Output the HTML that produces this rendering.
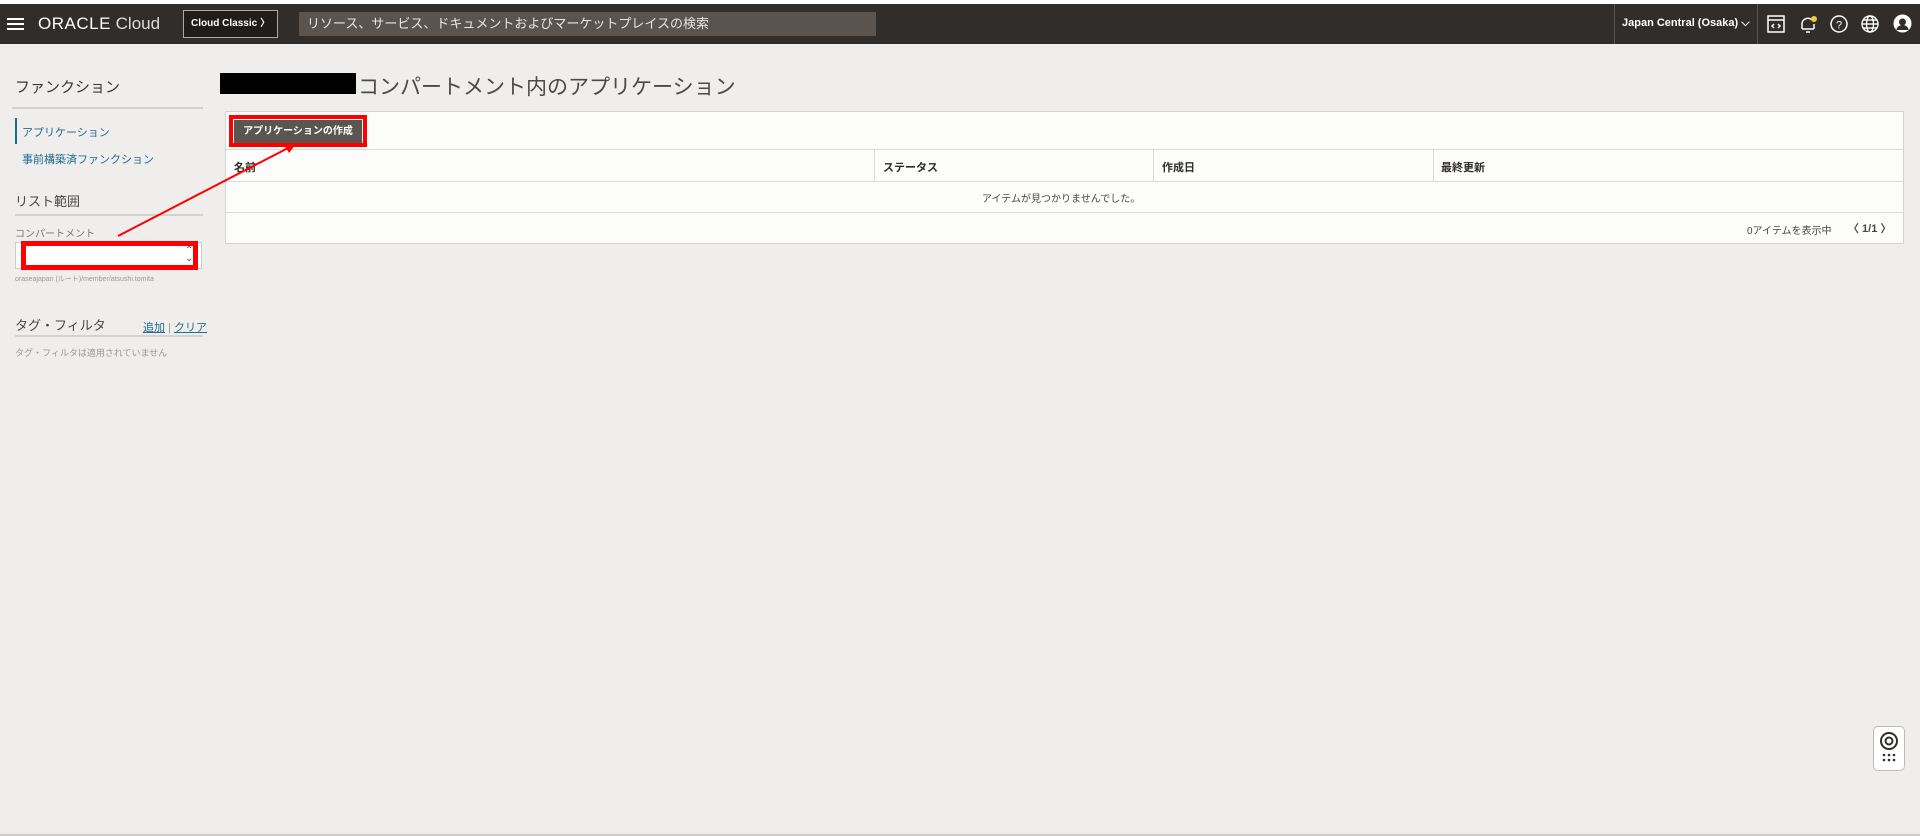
<!DOCTYPE html>
<html><head><meta charset="utf-8"><style>
*{box-sizing:border-box;margin:0;padding:0}
body{width:1920px;height:836px;background:#efeeec;font-family:"Liberation Sans","Noto Sans CJK JP",sans-serif;color:#312d2a;position:relative;overflow:hidden}
.a{position:absolute;white-space:nowrap}
#top{position:absolute;left:0;top:0;width:1920px;height:4px;background:#fff}
#hdr{position:absolute;left:0;top:4px;width:1920px;height:40px;background:#312d2a;color:#fff}
.ln{position:absolute;background:#d4d2cf;height:1px}
.link{color:#1f6c8f}
.panel{position:absolute;left:225px;top:111px;width:1679px;height:133px;background:#fcfcfb;border:1px solid #d6d4d1}
.row{position:absolute;left:0;width:100%;border-top:1px solid #dcdad7}
.th{position:absolute;top:159px;font-size:11px;font-weight:bold}
.vd{position:absolute;top:149px;width:1px;height:32px;background:#dcdad7}
</style></head><body>
<div id="top"></div>
<div id="hdr">
 <svg class="a" style="left:7px;top:13px" width="17" height="14"><rect y="1" width="17" height="2" fill="#fff"/><rect y="6" width="17" height="2" fill="#fff"/><rect y="11" width="17" height="2" fill="#fff"/></svg>
 <div class="a" style="left:38px;top:10px;font-size:17px"><span style="letter-spacing:0.5px">ORACLE</span> <span style="color:#ddd">Cloud</span></div>
 <div class="a" style="left:183px;top:6px;width:95px;height:28px;border:1px solid #aaa;background:#1f1c1a;font-size:10px;font-weight:bold;line-height:26px;text-align:center">Cloud Classic 〉</div>
 <div class="a" style="left:299px;top:8px;width:577px;height:24px;background:#5a534e;font-size:13px;line-height:24px;padding-left:8px;color:#e8e6e3">リソース、サービス、ドキュメントおよびマーケットプレイスの検索</div>
 <div class="a" style="left:1614px;top:0;width:1px;height:40px;background:#5b5550"></div>
 <div class="a" style="left:1622px;top:13px;font-size:11px;font-weight:bold">Japan Central (Osaka) ⌵</div>
 <div class="a" style="left:1757px;top:0;width:1px;height:40px;background:#5b5550"></div>
 <svg class="a" style="left:1767px;top:11px" width="18" height="18" fill="none" stroke="#fff" stroke-width="1.5"><rect x="1" y="1" width="16" height="16"/><line x1="1" y1="5" x2="17" y2="5"/><path d="M7 9l-2 2 2 2M11 9l2 2-2 2"/></svg>
 <svg class="a" style="left:1799px;top:10px" width="18" height="20" fill="none" stroke="#fff" stroke-width="1.5"><path d="M3 15V9a6 6 0 0 1 10-3M3 15h12M7 18h4M15 10v5"/><circle cx="15" cy="5" r="3" fill="#f4c542" stroke="none"/></svg>
 <svg class="a" style="left:1830px;top:11px" width="18" height="18" fill="none" stroke="#fff" stroke-width="1.5"><circle cx="9" cy="9" r="8"/><text x="9" y="13.5" font-size="11" fill="#fff" stroke="none" text-anchor="middle" font-family="Liberation Sans">?</text></svg>
 <svg class="a" style="left:1861px;top:11px" width="18" height="18" fill="none" stroke="#fff" stroke-width="1.4"><circle cx="9" cy="9" r="8"/><ellipse cx="9" cy="9" rx="3.5" ry="8"/><line x1="1" y1="9" x2="17" y2="9"/><line x1="2" y1="5" x2="16" y2="5"/><line x1="2" y1="13" x2="16" y2="13"/></svg>
 <svg class="a" style="left:1893px;top:10px" width="19" height="19"><circle cx="9.5" cy="9.5" r="9" fill="#fff"/><circle cx="9.5" cy="8" r="3.5" fill="#312d2a"/><path d="M3.5 16a6 5 0 0 1 12 0" fill="#312d2a"/></svg>
</div>

<div class="a" style="left:15px;top:76px;font-size:15px;color:#3a3632">ファンクション</div>
<div class="ln" style="left:12px;top:107px;width:191px;height:2px"></div>
<div class="a" style="left:15px;top:118px;width:2px;height:26px;background:#1f6c8f"></div>
<div class="a link" style="left:22px;top:124px;font-size:11px">アプリケーション</div>
<div class="a link" style="left:22px;top:151px;font-size:11px">事前構築済ファンクション</div>
<div class="a" style="left:15px;top:191px;font-size:13px;color:#4a4642">リスト範囲</div>
<div class="ln" style="left:15px;top:214px;width:188px;height:2px"></div>
<div class="a" style="left:15px;top:225px;font-size:10px;color:#777">コンパートメント</div>
<div class="a" style="left:15px;top:242px;width:187px;height:27px;background:#fff;border:1px solid #ccc"></div>
<div class="a" style="left:21px;top:241px;width:177px;height:29px;border:5px solid #f00"></div>
<div class="a" style="left:185px;top:247px;font-size:10px;color:#555;line-height:8px">⌃<br>⌄</div>
<div class="a" style="left:15px;top:274px;font-size:7px;color:#999">oraseajapan (ルート)/member/atsushi.tomita</div>
<div class="a" style="left:15px;top:315px;font-size:13px;color:#4a4642">タグ・フィルタ</div>
<div class="a" style="left:143px;top:319px;font-size:11px"><span class="link" style="text-decoration:underline">追加</span> <span style="color:#999">|</span> <span class="link" style="text-decoration:underline">クリア</span></div>
<div class="ln" style="left:15px;top:335px;width:188px;height:2px"></div>
<div class="a" style="left:15px;top:346px;font-size:9px;color:#999">タグ・フィルタは適用されていません</div>

<div class="a" style="left:220px;top:73px;width:136px;height:21px;background:#000"></div>
<div class="a" style="left:358px;top:71px;font-size:21px;color:#4d4945">コンパートメント内のアプリケーション</div>

<div class="panel">
 <div class="row" style="top:37px"></div>
 <div class="row" style="top:69px"></div>
 <div class="row" style="top:100px"></div>
</div>
<div class="a" style="left:234px;top:120px;width:128px;height:23px;background:#5b5550;color:#fff;font-size:10px;font-weight:bold;line-height:23px;text-align:center">アプリケーションの作成</div>
<div class="a" style="left:229px;top:115px;width:138px;height:32px;border:4px solid #f00"></div>
<div class="vd" style="left:874px"></div><div class="vd" style="left:1153px"></div><div class="vd" style="left:1433px"></div>
<div class="th" style="left:234px">名前</div>
<div class="th" style="left:883px">ステータス</div>
<div class="th" style="left:1162px">作成日</div>
<div class="th" style="left:1441px">最終更新</div>
<div class="a" style="left:982px;top:190px;font-size:10px;color:#4a4642">アイテムが見つかりませんでした。</div>
<div class="a" style="left:1747px;top:222px;font-size:10px;color:#4a4642">0アイテムを表示中</div>
<div class="a" style="left:1848px;top:220px;font-size:11px;font-weight:bold;color:#4a4642">〈 1/1 〉</div>

<svg class="a" style="left:0;top:0" width="1920" height="836"><line x1="118" y1="236" x2="292" y2="146" stroke="#f00" stroke-width="2"/><path d="M296 144l-12 1 5 8z" fill="#f00"/></svg>

<div class="a" style="left:1873px;top:726px;width:32px;height:45px;background:#fff;border:1px solid #bbb;border-radius:5px"></div>
<svg class="a" style="left:1879px;top:731px" width="20" height="34" fill="none" stroke="#312d2a" stroke-width="2"><circle cx="10" cy="10" r="8"/><circle cx="10" cy="10" r="3.5"/><g fill="#312d2a" stroke="none"><circle cx="5" cy="24" r="1.3"/><circle cx="10" cy="24" r="1.3"/><circle cx="15" cy="24" r="1.3"/><circle cx="5" cy="29" r="1.3"/><circle cx="10" cy="29" r="1.3"/><circle cx="15" cy="29" r="1.3"/></g></svg>
<div class="a" style="left:0;top:834px;width:1920px;height:2px;background:#cfcdca"></div>
</body></html>
